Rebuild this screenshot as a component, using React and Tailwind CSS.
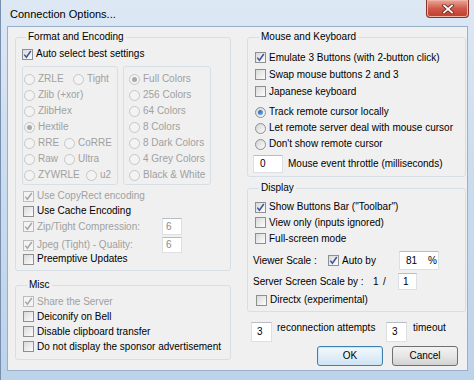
const font = "font-['Liberation_Sans',Arial,sans-serif]";

const Box = ({ checked, disabled }) => (
  <span
    className={`flex h-[11px] w-[11px] shrink-0 items-center justify-center border ${
      disabled
        ? 'border-[#bdbdbd] bg-[#f4f4f4]'
        : 'border-[#8e8f8f] bg-gradient-to-br from-[#d9d9d9] to-[#fdfdfd]'
    }`}
  >
    {checked && (
      <svg width="9" height="9" viewBox="0 0 9 9">
        <path
          d="M1.3 4.6 L3.4 7.2 L7.8 1"
          fill="none"
          stroke={disabled ? '#a6a6a6' : '#3a54a4'}
          strokeWidth="1.5"
        />
      </svg>
    )}
  </span>
);

const Check = ({ checked, disabled, className = '', children }) => (
  <div className={`flex items-center gap-[3px] ${disabled ? 'text-[#a0a0a0]' : 'text-black'} ${className}`}>
    <Box checked={checked} disabled={disabled} />
    <span className="whitespace-nowrap">{children}</span>
  </div>
);

const Dot = ({ checked, disabled }) => (
  <span
    className={`flex h-[11px] w-[11px] shrink-0 items-center justify-center rounded-full border ${
      disabled
        ? 'border-[#c6c6c6] bg-[#f3f3f3]'
        : 'border-[#8e8f8f] bg-gradient-to-br from-[#d4d4d4] to-[#fcfcfc]'
    }`}
  >
    {checked && (
      <span
        className={`h-[5px] w-[5px] rounded-full ${
          disabled ? 'bg-[#a9a9a9]' : 'bg-gradient-to-br from-[#1a5cb5] to-[#78b0e8]'
        }`}
      />
    )}
  </span>
);

const Radio = ({ checked, disabled, className = '', children }) => (
  <div className={`flex items-center gap-[3px] ${disabled ? 'text-[#a0a0a0]' : 'text-black'} ${className}`}>
    <Dot checked={checked} disabled={disabled} />
    <span className="whitespace-nowrap">{children}</span>
  </div>
);

const Field = ({ className = '', children }) => (
  <div className={`flex shrink-0 items-center border border-[#dcdfe4] border-t-[#b9bcc2] bg-white ${className}`}>
    {children}
  </div>
);

const Group = ({ title, className = '', children }) => (
  <fieldset className={`rounded-[3px] border border-[#d5dfe5] ${className}`}>
    <legend className="ml-[4px] px-[2px] leading-[12px] text-black">{title}</legend>
    {children}
  </fieldset>
);

const Button = ({ primary, children }) => (
  <button
    className={`flex h-[20px] w-[66px] items-center justify-center rounded-[3px] border text-black ${
      primary
        ? 'border-[#3c7fb1] bg-gradient-to-b from-[#f2f8fc] via-[#e3eff8] to-[#cfe3f2] shadow-[inset_0_0_0_1px_#cde6f7]'
        : 'border-[#707070] bg-gradient-to-b from-[#f2f2f2] via-[#e6e6e6] to-[#d2d2d2]'
    }`}
  >
    {children}
  </button>
);

export default function App() {
  return (
    <div
      className={`${font} flex h-[380px] w-[474px] flex-col border-l border-[#7890ae] bg-gradient-to-b from-[#dde8f4] via-[#c9dbee] to-[#bdd3ea] text-[10px] leading-[12px]`}
    >
      {/* title bar */}
      <div className="flex h-[26px] shrink-0 items-start">
        <span className="ml-[9px] mt-[7px] text-[11px] leading-[14px] text-black">Connection Options...</span>
        <div className="ml-auto mr-[5px] flex h-[18px] w-[43px] items-center justify-center rounded-b-[4px] border border-t-0 border-[#86332a] bg-gradient-to-b from-[#e9a899] via-[#d0594a] to-[#c23b2b] shadow-[inset_0_0_0_1px_#f0b3a6]">
          <svg width="12" height="10" viewBox="0 0 12 10">
            <path d="M2 1.5 L10 8.5 M10 1.5 L2 8.5" stroke="#5e231c" strokeWidth="3.4" strokeLinecap="square" />
            <path d="M2 1.5 L10 8.5 M10 1.5 L2 8.5" stroke="#ffffff" strokeWidth="1.8" strokeLinecap="square" />
          </svg>
        </div>
      </div>

      {/* client area */}
      <div className="ml-[6px] mr-[6px] flex h-[345px] shrink-0 gap-[16px] border border-[#9aafc8] bg-[#f0f0f0] pl-[7px] pt-[4px]">
        {/* left column */}
        <div className="flex w-[216px] flex-col">
          <Group title="Format and Encoding" className="h-[240px] pl-[6px]">
            <Check checked className="mt-[3px] h-[16px]">Auto select best settings</Check>
            <div className="mt-[4px] flex gap-[5px]">
              <div className="h-[119px] w-[96px] rounded-[3px] border border-[#d5dfe5] pl-[1px] pt-[4px]">
                <div className="flex h-[16px]">
                  <Radio disabled className="w-[49px]">ZRLE</Radio>
                  <Radio disabled>Tight</Radio>
                </div>
                <Radio disabled className="h-[16px]">Zlib (+xor)</Radio>
                <Radio disabled className="h-[16px]">ZlibHex</Radio>
                <Radio disabled checked className="h-[16px]">Hextile</Radio>
                <div className="flex h-[16px]">
                  <Radio disabled className="w-[40px]">RRE</Radio>
                  <Radio disabled>CoRRE</Radio>
                </div>
                <div className="flex h-[16px]">
                  <Radio disabled className="w-[40px]">Raw</Radio>
                  <Radio disabled>Ultra</Radio>
                </div>
                <div className="flex h-[16px]">
                  <Radio disabled className="w-[62px]">ZYWRLE</Radio>
                  <Radio disabled>u2</Radio>
                </div>
              </div>
              <div className="h-[119px] w-[88px] rounded-[3px] border border-[#d5dfe5] pl-[5px] pt-[4px]">
                <Radio disabled checked className="h-[16px]">Full Colors</Radio>
                <Radio disabled className="h-[16px]">256 Colors</Radio>
                <Radio disabled className="h-[16px]">64 Colors</Radio>
                <Radio disabled className="h-[16px]">8 Colors</Radio>
                <Radio disabled className="h-[16px]">8 Dark Colors</Radio>
                <Radio disabled className="h-[16px]">4 Grey Colors</Radio>
                <Radio disabled className="h-[16px]">Black &amp; White</Radio>
              </div>
            </div>
            <div className="mt-[3px] flex flex-col pl-[1px]">
              <Check checked disabled className="h-[16px]">Use CopyRect encoding</Check>
              <Check className="h-[14px]">Use Cache Encoding</Check>
              <div className="flex h-[17px] items-center">
                <Check checked disabled className="w-[139px]">Zip/Tight Compression:</Check>
                <Field className="h-[17px] w-[20px] pl-[3px] text-[#8a8a8a]">6</Field>
              </div>
              <div className="mt-[2px] flex h-[16px] items-center">
                <Check checked disabled className="w-[139px]">Jpeg (Tight) - Quality:</Check>
                <Field className="h-[16px] w-[20px] pl-[3px] text-[#8a8a8a]">6</Field>
              </div>
              <Check className="h-[12px]">Preemptive Updates</Check>
            </div>
          </Group>

          <Group title="Misc" className="mt-[8px] h-[81px] pl-[7px] pt-[3px]">
            <Check checked disabled className="h-[15px]">Share the Server</Check>
            <Check className="h-[15px]">Deiconify on Bell</Check>
            <Check className="h-[15px]">Disable clipboard transfer</Check>
            <Check className="h-[15px]">Do not display the sponsor advertisement</Check>
          </Group>
        </div>

        {/* right column */}
        <div className="flex w-[219px] flex-col">
          <Group title="Mouse and Keyboard" className="h-[146px] pl-[7px] pt-[6px]">
            <Check checked className="h-[17px]">Emulate 3 Buttons (with 2-button click)</Check>
            <Check className="h-[17px]">Swap mouse buttons 2 and 3</Check>
            <Check className="h-[17px]">Japanese keyboard</Check>
            <Radio checked className="mt-[4px] h-[16px]">Track remote cursor locally</Radio>
            <Radio className="h-[16px]">Let remote server deal with mouse cursor</Radio>
            <Radio className="h-[16px]">Don't show remote cursor</Radio>
            <div className="-ml-[2px] mt-[3px] flex h-[18px] items-center gap-[5px]">
              <Field className="h-[18px] w-[30px] pl-[6px]">0</Field>
              <span className="whitespace-nowrap">Mouse event throttle (milliseconds)</span>
            </div>
          </Group>

          <Group title="Display" className="mt-[5px] h-[130px] pl-[7px] pt-[5px]">
            <Check checked className="h-[16px]">Show Buttons Bar ("Toolbar")</Check>
            <Check className="h-[15px]">View only (inputs ignored)</Check>
            <Check className="h-[17px]">Full-screen mode</Check>
            <div className="-ml-[2px] mt-[4px] flex h-[19px] items-center">
              <span className="w-[75px] whitespace-nowrap">Viewer Scale :</span>
              <Check checked className="w-[71px]">Auto by</Check>
              <Field className="h-[19px] w-[40px] pl-[6px]">
                <span className="w-[22px]">81</span>
                <span>%</span>
              </Field>
            </div>
            <div className="-ml-[2px] mt-[3px] flex h-[17px] items-center">
              <span className="w-[120px] whitespace-nowrap">Server Screen Scale by :</span>
              <span className="w-[10px]">1</span>
              <span className="w-[15px]">/</span>
              <Field className="h-[17px] w-[19px] pl-[4px]">1</Field>
            </div>
            <Check className="ml-[1px] mt-[2px] h-[16px]">Directx (experimental)</Check>
          </Group>

          <div className="ml-[4px] mt-[10px] flex h-[20px] items-start">
            <Field className="h-[20px] w-[21px] pl-[5px]">3</Field>
            <span className="ml-[5px] w-[104px] whitespace-nowrap">reconnection attempts</span>
            <Field className="ml-[5px] h-[20px] w-[21px] pl-[5px]">3</Field>
            <span className="ml-[6px]">timeout</span>
          </div>

          <div className="mt-[4px] flex justify-end gap-[9px] pr-[8px]">
            <Button primary>OK</Button>
            <Button>Cancel</Button>
          </div>
        </div>
      </div>
    </div>
  );
}
